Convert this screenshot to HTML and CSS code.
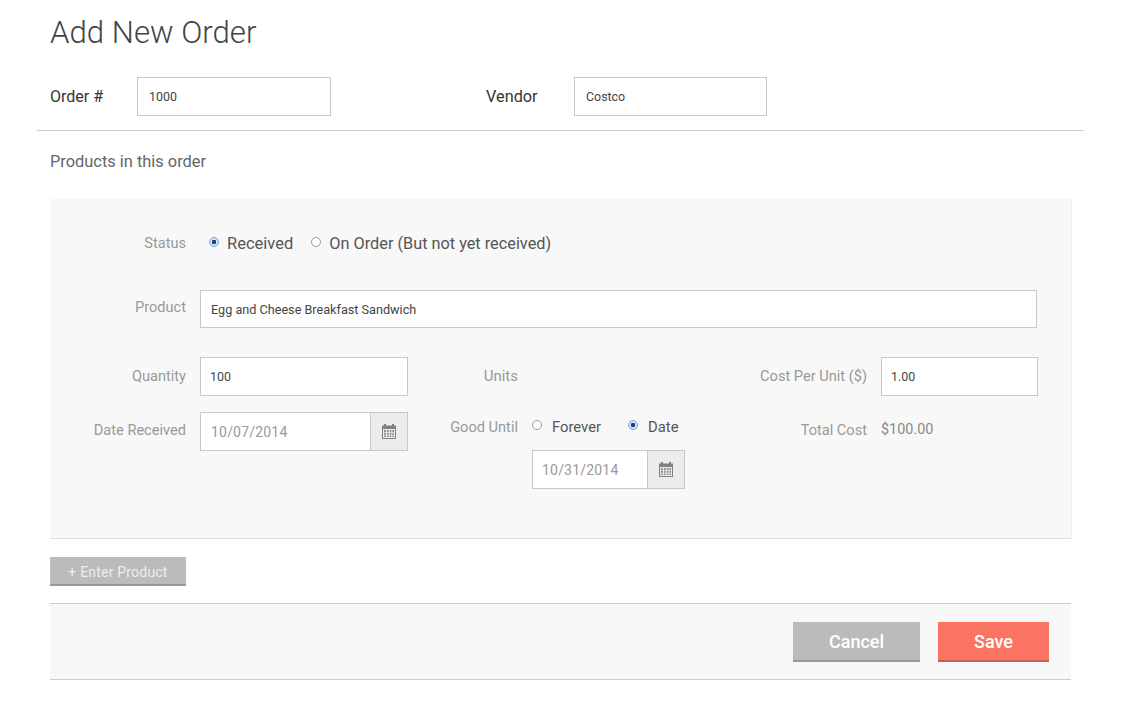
FILE: index.html
```html
<!DOCTYPE html>
<html lang="en">

<head>
  <meta charset="UTF-8" />
  <title>Add New Order</title>
  <link rel="stylesheet" href="styles.css">
</head>

<body>
  <svg class="icon-defs" width="0" height="0" aria-hidden="true">
    <symbol id="calendar" viewBox="0 0 14 15">
      <path fill="#808080" fill-rule="evenodd" d="M2 0h2v1.500h6V0h2v1.500h2V15H0V1.500h2zM1 5v9h12V5z" />
      <path fill="#909090" d="M2 6h2v2H2zM5 6h1.700v2H5zM7.700 6h1.700v2H7.700zM10.300 6H12v2h-1.700zM2 8.800h2v2H2zM5 8.800h1.700v2H5zM7.700 8.800h1.700v2H7.700zM10.300 8.800H12v2h-1.700zM2 11.500h2V13H2zM5 11.500h1.700V13H5zM7.700 11.500h1.700V13H7.700zM10.300 11.500H12V13h-1.700z" />
    </symbol>
  </svg>

  <form class="page">
    <h1 class="page-title">Add New Order</h1>

    <div class="order-head">
      <label class="head-label" for="orderNumber">Order #</label>
      <input class="text-input order-input" type="text" id="orderNumber" value="1000" />
      <label class="head-label vendor-label" for="vendor">Vendor</label>
      <input class="text-input vendor-input" type="text" id="vendor" value="Costco" />
    </div>

    <h2 class="section-title">Products in this order</h2>

    <div class="product-panel">
      <div class="status-row">
        <span class="field-label">Status</span>
        <label class="radio status-radio"><input type="radio" name="status" checked /> Received</label>
        <label class="radio status-radio on-order"><input type="radio" name="status" /> On Order (But not yet received)</label>
      </div>

      <div class="product-row">
        <label class="field-label" for="product">Product</label>
        <input class="text-input" type="text" id="product" value="Egg and Cheese Breakfast Sandwich" />
      </div>

      <div class="detail-grid">
        <label class="field-label label-raised" for="quantity">Quantity</label>
        <input class="text-input" type="text" id="quantity" value="100" />
        <span class="field-label label-raised units-label">Units</span>
        <span></span>
        <label class="field-label label-raised" for="cost">Cost Per Unit ($)</label>
        <input class="text-input" type="text" id="cost" value="1.00" />

        <label class="field-label label-top" for="received">Date Received</label>
        <div class="date-input">
          <input type="text" id="received" value="10/07/2014" />
          <span class="date-btn"><svg width="14" height="15"><use href="#calendar" /></svg></span>
        </div>
        <span class="field-label label-top good-label">Good Until</span>
        <div class="good-until">
          <div class="good-radios">
            <label class="radio"><input type="radio" name="until" /> Forever</label>
            <label class="radio"><input type="radio" name="until" checked /> Date</label>
          </div>
          <div class="date-input">
            <input type="text" value="10/31/2014" />
            <span class="date-btn"><svg width="14" height="15"><use href="#calendar" /></svg></span>
          </div>
        </div>
        <span class="field-label label-top total-label">Total Cost</span>
        <span class="total-value">$100.00</span>
      </div>
    </div>

    <button class="btn btn-enter" type="button">+ Enter Product</button>

    <div class="form-actions">
      <button class="btn btn-cancel" type="button">Cancel</button>
      <button class="btn btn-save" type="submit">Save</button>
    </div>
  </form>
</body>

</html>
```

FILE: styles.css
```css
* {
  box-sizing: border-box;
}

body {
  margin: 0;
  background: #fff;
  color: #555;
  font-family: Roboto, "Liberation Sans", sans-serif;
}

.icon-defs {
  position: absolute;
}

.page {
  width: 1071px;
  padding: 0 0 29px 50px;
}

.page-title {
  margin: 0;
  padding-top: 14px;
  height: 77px;
  font-size: 31.2px;
  line-height: 38px;
  font-weight: 300;
  color: #444;
}

.order-head {
  display: flex;
  align-items: center;
  margin: 0 -13px 0 -13px;
  padding: 0 0 14px 13px;
  width: 1047px;
  border-bottom: 1px solid #ccc;
}

.head-label {
  width: 87px;
  font-size: 16px;
  color: #333;
}

.vendor-label {
  width: 88px;
  margin-left: 155px;
  font-size: 16.300px;
}

.order-input {
  width: 194px;
}

.vendor-input {
  width: 193px;
}

.text-input {
  height: 39px;
  padding: 0 11px;
  border: 1px solid #c8c8c8;
  background: #fff;
  color: #444;
  font-family: inherit;
  font-size: 12.400px;
  outline: none;
}

.section-title {
  margin: 0;
  padding-top: 21px;
  height: 68px;
  font-size: 16.400px;
  line-height: 19px;
  font-weight: 400;
  color: #666;
}

.product-panel {
  padding: 25px 34px 49px 0;
  background: #f8f8f8;
  border-bottom: 1px solid #ddd;
  box-shadow: 1px 0 0 #eee;
}

.field-label {
  font-size: 14.600px;
  color: #999;
  text-align: right;
}

.status-row,
.product-row {
  display: flex;
  align-items: center;
}

.status-row {
  height: 38px;
  margin-bottom: 28px;
}

.status-row .field-label,
.product-row .field-label {
  width: 136px;
}

.status-row .status-radio:first-of-type {
  margin-left: 23px;
}

.radio {
  display: flex;
  align-items: center;
  color: #555;
  font-size: 14.800px;
  white-space: nowrap;
}

.status-row .status-radio {
  margin-right: 18px;
  font-size: 16.500px;
}

.status-row .on-order {
  font-size: 16.300px;
}

.on-order input {
  margin-right: 7px;
}

.product-row {
  gap: 14px;
  margin-bottom: 29px;
}

.product-row .field-label {
  padding-bottom: 4px;
}

.product-row .text-input {
  width: 837px;
  height: 38px;
  padding: 0 10px;
  font-size: 12.650px;
}

.detail-grid {
  display: grid;
  grid-template-columns: 136px 208px 96px 153px 168px 157px;
  grid-template-rows: 39px auto;
  column-gap: 14px;
  row-gap: 16px;
  align-items: center;
}

.detail-grid .text-input {
  width: 100%;
  padding: 0 9px;
}

.units-label {
  font-size: 15px;
}

.label-raised {
  padding-bottom: 2px;
}

.label-top {
  align-self: start;
  padding-top: 9px;
}

.good-label {
  padding-top: 6px;
}

.radio input {
  appearance: none;
  width: 10px;
  height: 10px;
  margin: 0 8px 2px 0;
  border: 1px solid #999;
  border-radius: 50%;
  background: #fff;
}

.radio input:checked {
  border-color: #7d9fd8;
  background: radial-gradient(circle, #1d3f7c 0 2px, #d5e2f7 2.500px);
}

.date-input {
  display: flex;
  align-self: start;
  height: 39px;
  border: 1px solid #c8c8c8;
  background: #fff;
}

.date-input input {
  flex: 1;
  min-width: 0;
  padding: 0 10px;
  border: none;
  outline: none;
  font-family: inherit;
  font-size: 14px;
  letter-spacing: 0.2px;
  color: #999;
}

.good-until .date-input input {
  padding: 0 9px;
}

.date-btn {
  display: flex;
  align-items: center;
  justify-content: center;
  width: 37px;
  border-left: 1px solid #c8c8c8;
  background: #ececec;
}

.good-until {
  align-self: start;
  width: 153px;
}

.good-radios {
  display: flex;
  gap: 27px;
  height: 38px;
  padding-bottom: 9px;
  align-items: center;
}

.good-radios .radio input {
  margin-right: 10px;
  margin-bottom: 4px;
}

.total-value {
  align-self: start;
  padding-top: 9px;
  font-size: 14.400px;
  color: #888;
}

.btn {
  display: block;
  border: none;
  border-bottom: 2px solid #999;
  background: #bbb;
  color: #fff;
  font-family: inherit;
}

.btn-enter {
  width: 136px;
  height: 29px;
  margin: 18px 0 17px;
  padding: 2px 0 0;
  font-size: 14px;
  letter-spacing: 0.2px;
  color: #eee;
}

.form-actions {
  display: flex;
  justify-content: flex-end;
  gap: 18px;
  height: 77px;
  padding: 18px 22px 0 0;
  background: #f8f8f8;
  border-top: 1px solid #ccc;
  border-bottom: 1px solid #ccc;
}

.btn-cancel,
.btn-save {
  height: 40px;
  font-size: 18px;
  font-weight: 500;
}

.btn-cancel {
  width: 127px;
}

.btn-save {
  width: 111px;
  background: #fb7463;
  border-bottom-color: #c55f53;
}
```
